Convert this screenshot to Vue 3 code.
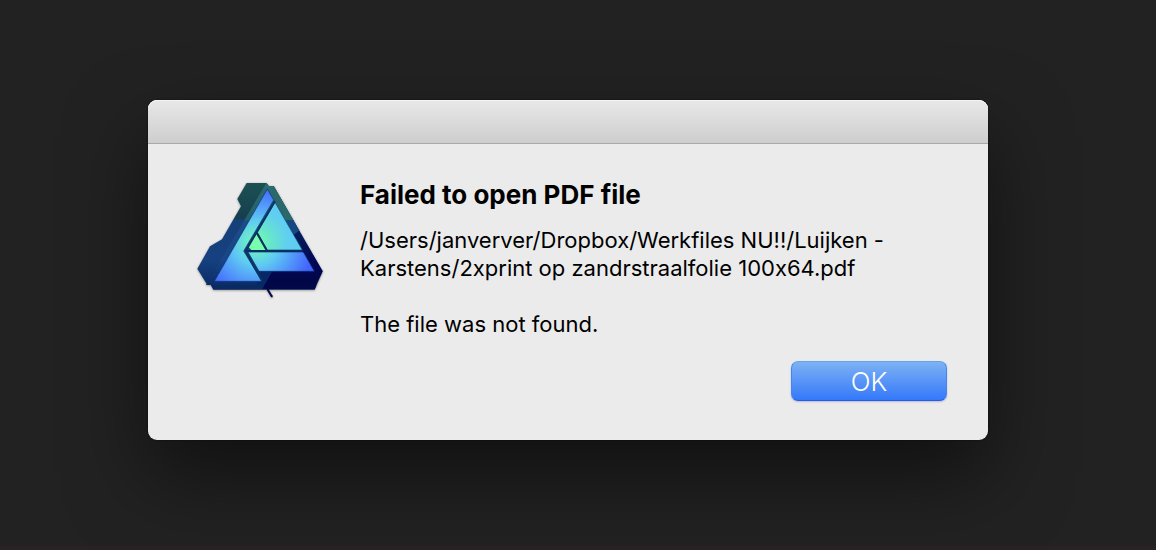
<template>
  <div class="desktop">
    <section class="dialog" role="alertdialog" aria-labelledby="dialog-title" aria-describedby="dialog-message">
      <header class="titlebar"></header>

      <div class="dialog-body">
        <svg class="app-icon" viewBox="0 0 420 390" aria-hidden="true">
          <defs>
            <linearGradient id="leftSide" x1="0" y1="0" x2="0" y2="1">
              <stop offset="0" stop-color="#1c5054" />
              <stop offset="0.35" stop-color="#163e4e" />
              <stop offset="0.36" stop-color="#164078" />
              <stop offset="0.75" stop-color="#164080" />
              <stop offset="1" stop-color="#0b2c66" />
            </linearGradient>
            <linearGradient id="frame" gradientUnits="userSpaceOnUse" x1="0" y1="33" x2="0" y2="339">
              <stop offset="0" stop-color="#2c6d70" />
              <stop offset="0.36" stop-color="#22606a" />
              <stop offset="0.37" stop-color="#1b4c88" />
              <stop offset="0.75" stop-color="#184686" />
              <stop offset="1" stop-color="#0b2c68" />
            </linearGradient>
            <linearGradient id="navy" x1="0" y1="0" x2="0" y2="1">
              <stop offset="0" stop-color="#081f5c" />
              <stop offset="0.55" stop-color="#010658" />
              <stop offset="1" stop-color="#020744" />
            </linearGradient>
            <radialGradient id="glow" gradientUnits="userSpaceOnUse" cx="199" cy="212" r="172">
              <stop offset="0" stop-color="#74f8b4" />
              <stop offset="0.15" stop-color="#6cecca" />
              <stop offset="0.4" stop-color="#5fcaf2" />
              <stop offset="0.68" stop-color="#5298fa" />
              <stop offset="1" stop-color="#4364fb" />
            </radialGradient>
            <radialGradient id="glowRight" gradientUnits="userSpaceOnUse" cx="199" cy="212" r="190">
              <stop offset="0" stop-color="#7affa8" />
              <stop offset="0.22" stop-color="#68e7c8" />
              <stop offset="0.5" stop-color="#60cff0" />
              <stop offset="1" stop-color="#5cc5f5" />
            </radialGradient>
          </defs>
          <g class="icon-shape">
            <path d="M62 338 L70 353 H374 L398 298 L251 42 H231 Z" fill="#071f58" />
            <path d="M170 33 H229 L236 40 L64 339 H52 L22 290 L60 223 L96 202 L153 103 L142 81 Z" fill="url(#leftSide)" />
            <path d="M229 33 L234 42 H251 L328 176 L304 199 L360 300 L220 339 H48 Z" fill="url(#frame)" />
            <path d="M251 42 L310 144 H286 L244 70 Z" fill="#2b686c" />
            <path d="M310 144 L328 176 L314 192 L286 144 Z" fill="#164982" />
            <path d="M327 176 L398 298 L374 345 H220 L208 298 L370 296 L309 190 Z" fill="url(#navy)" />
            <path d="M207 298 H247 L224 339 H200 Z" fill="#082766" />
            <path d="M64 339 H223 L218 351 H70 Z" fill="#0a2a62" />
            <path d="M223 339 H379 L374 351 H218 Z" fill="#03084a" />
            <path d="M232 351 L245 373 H248" fill="none" stroke="#020945" stroke-width="6" />
          </g>
          <path d="M232 51 L251 84 L161 237 L216 328 H73 Z" fill="url(#glow)" stroke="#0c3674" stroke-width="2" />
          <path d="M255 91 L337 234 H232 L202 181 Z" fill="url(#glowRight)" stroke="#0d456e" stroke-width="2" />
          <path d="M174 240 H340 L373 298 H207 Z" fill="url(#glow)" stroke="#0c2d72" stroke-width="2" />
          <path d="M200 182 L230 234 H184 L175 224 Z" fill="#77ffad" />
          <path d="M255 87 L167 237 L217 328" fill="none" stroke="#0a3462" stroke-width="6" />
          <path d="M200 182 L230 235 M168 237 H337" fill="none" stroke="#083064" stroke-width="6" />
        </svg>

        <div class="content">
          <h1 id="dialog-title" class="title">{{ title }}</h1>
          <div id="dialog-message" class="message">
            <p>{{ filePath }}</p>
            <p>{{ reason }}</p>
          </div>
          <button type="button" class="ok-button">OK</button>
        </div>
      </div>
    </section>
  </div>
</template>

<script setup>
const title = 'Failed to open PDF file';
const filePath = '/Users/janverver/Dropbox/Werkfiles NU!!/Luijken - Karstens/2xprint op zandrstraalfolie 100x64.pdf';
const reason = 'The file was not found.';
</script>

<style>
body {
  margin: 0;
  background: #222;
}
</style>

<style scoped>
.desktop {
  box-sizing: border-box;
  min-height: 100vh;
  padding: 100px 168px 100px 148px;
  border-bottom: 4px solid #2a2125;
  overflow: hidden;
  font-family: Inter, 'Liberation Sans', sans-serif;
  font-variant-ligatures: no-contextual;
  color: #000;
}

.dialog {
  border-radius: 9px;
  background: #ebebeb;
  box-shadow: 0 36px 80px rgba(0, 0, 0, 0.5), 0 0 2px rgba(0, 0, 0, 0.6);
}

.titlebar {
  box-sizing: border-box;
  height: 44px;
  border-bottom: 1px solid #a9a9ab;
  border-radius: 9px 9px 0 0;
  background: linear-gradient(#e8e8e9, #cececf);
  box-shadow: inset 0 1px 0 #f4f4f4;
}

.dialog-body {
  display: flex;
  gap: 30px;
  padding: 28px 41px 39px 42px;
}

.app-icon {
  flex: none;
  width: 140px;
  height: 130px;
}

.icon-shape {
  filter: drop-shadow(0 2px 3px rgba(0, 0, 0, 0.4));
}

.content {
  display: flex;
  flex: 1;
  flex-direction: column;
  min-width: 0;
  padding-top: 6px;
}

.title {
  margin: 0 0 14px;
  font-size: 26px;
  font-weight: 700;
  line-height: 34px;
}

.message {
  font-size: 22px;
  line-height: 28px;
}

.message p {
  margin: 0 0 28px;
}

.message p:last-child {
  margin-bottom: 23px;
}

.ok-button {
  align-self: flex-end;
  width: 156px;
  height: 40px;
  padding: 0;
  border: 1px solid;
  border-color: #65a4ef #4285f4 #2459f2;
  border-radius: 7px;
  background: linear-gradient(#7db2f4, #3478fa);
  box-shadow: 0 1px 2px rgba(0, 0, 0, 0.2);
  font-family: inherit;
  font-size: 26px;
  font-weight: 300;
  color: #fff;
}
</style>
